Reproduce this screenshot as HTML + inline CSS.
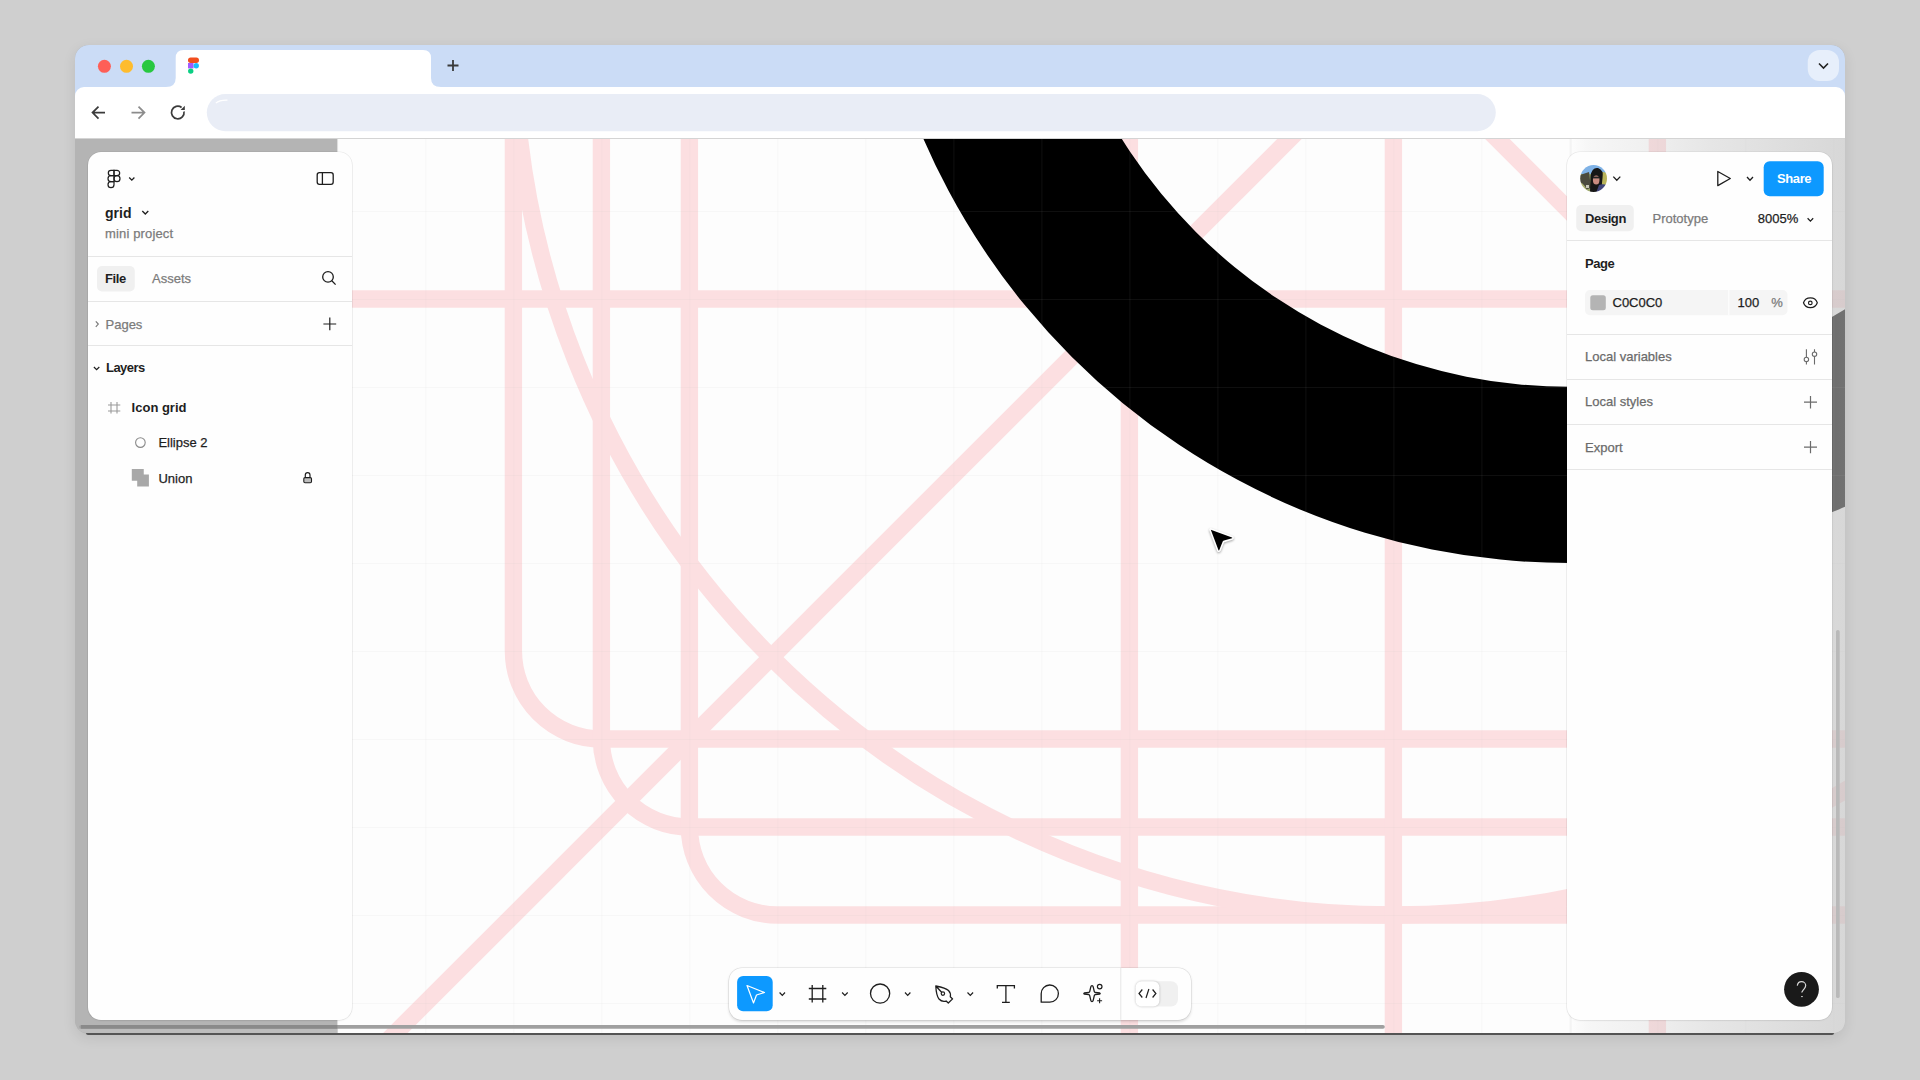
<!DOCTYPE html>
<html><head><meta charset="utf-8">
<style>
*{box-sizing:border-box;margin:0;padding:0}
html,body{width:1920px;height:1080px;overflow:hidden;background:#cfcfcf;font-family:"Liberation Sans",sans-serif}
.a{position:absolute}
.t{position:absolute;white-space:nowrap;line-height:1;font-size:13px;color:#1e1e1e;-webkit-text-stroke:.25px currentColor}
.b{-webkit-text-stroke:0}
.b{font-weight:bold}
.g{color:#7b7b7b}
.panel{position:absolute;background:#fefefe;border-radius:13px;box-shadow:0 0 0 .6px rgba(0,0,0,.09),0 1px 2px rgba(0,0,0,.05)}
.hr{position:absolute;height:1px;background:#e6e6e6}
svg{position:absolute;overflow:visible}
</style></head><body>
<!-- window shadow / base -->
<div class="a" style="left:75px;top:45px;width:1770px;height:989px;border-radius:14px;background:#b4b4b4;box-shadow:0 4px 14px rgba(0,0,0,.09)"></div>
<div class="a" style="left:86px;top:1032.6px;width:1748px;height:2.2px;border-radius:0 0 8px 8px;background:#545454"></div>
<div class="a" style="left:75px;top:45px;width:1770px;height:988px;border-radius:14px;overflow:hidden;background:#b4b4b4">
  <div class="a" style="left:0;top:0;width:1770px;height:60px;background:#cbdcf6"></div>
  <div class="a" style="left:0;top:42px;width:1770px;height:51px;background:#fff;border-radius:9px 9px 0 0"></div>
  <div class="a" style="left:0;top:93px;width:1770px;height:1px;background:#d4d4d4"></div>
</div>
<!-- active tab -->
<svg style="left:0;top:0" width="1920" height="140">
  <path d="M166 87 Q175.7 87 175.7 78 L175.7 58 Q175.7 50 183.7 50 L423 50 Q431 50 431 58 L431 78 Q431 87 441 87 Z" fill="#fff"/>
  <circle cx="104.4" cy="66.3" r="6.5" fill="#fe5f57"/>
  <circle cx="126.5" cy="66.3" r="6.5" fill="#febc2e"/>
  <circle cx="148.4" cy="66.3" r="6.5" fill="#28c840"/>
  <!-- figma logo favicon -->
  <g transform="translate(188,57.6)">
    <rect x="0" y="0" width="11" height="5.4" rx="2.7" fill="#f24e1e"/>
    <rect x="0" y="5.4" width="5.5" height="5.4" rx="0" fill="#a259ff"/>
    <circle cx="8.2" cy="8.1" r="2.7" fill="#1abcfe"/>
    <circle cx="2.75" cy="13.5" r="2.7" fill="#0acf83"/>
  </g>
  <path d="M453 60 V71 M447.5 65.5 H458.5" stroke="#3a3a3a" stroke-width="1.8" fill="none"/>
  <rect x="1807.75" y="50" width="31.25" height="31" rx="12" fill="#e7effb"/>
  <path d="M1819 63.5 L1823.5 68 L1828 63.5" stroke="#222" stroke-width="1.6" fill="none"/>
  <!-- toolbar -->
  <path d="M105 112.6 H93 M98.5 106.6 L92.5 112.6 L98.5 118.6" stroke="#3b3b3b" stroke-width="1.7" fill="none"/>
  <path d="M131.5 112.6 H144 M138.5 106.6 L144.5 112.6 L138.5 118.6" stroke="#8c8c8c" stroke-width="1.7" fill="none"/>
  <path d="M184 111.5 A6.3 6.3 0 1 1 181.6 107.5" stroke="#3b3b3b" stroke-width="1.7" fill="none"/>
  <path d="M184.8 105.8 V110 H180.6 Z" fill="#3b3b3b"/>
  <rect x="206.8" y="94" width="1289" height="37.2" rx="18.6" fill="#e9edf6"/>
  <path d="M215.8 103.2 Q219.5 99.8 227.5 100.1" stroke="#fff" stroke-width="1.1" fill="none"/>
</svg>

<!-- canvas -->
<svg style="left:0;top:0" width="1920" height="1080" viewBox="0 0 1920 1080">
  <defs>
    <clipPath id="cv"><path d="M75 139 H1845 V1019 Q1845 1033 1831 1033 H89 Q75 1033 75 1019 Z"/></clipPath>
    <linearGradient id="rg" x1="0" x2="1" y1="0" y2="0">
      <stop offset="0" stop-color="#bebebe" stop-opacity="0"/>
      <stop offset=".06" stop-color="#bebebe" stop-opacity=".1"/>
      <stop offset=".3" stop-color="#bebebe" stop-opacity=".22"/>
      <stop offset=".5" stop-color="#bebebe" stop-opacity=".36"/>
      <stop offset="1" stop-color="#bebebe" stop-opacity=".6"/>
    </linearGradient>
    <pattern id="grid" x="337.4" y="-1021" width="88" height="88" patternUnits="userSpaceOnUse">
      <path d="M0 0 V88 M0 0 H88" stroke="rgba(180,180,180,.16)" stroke-width="1" fill="none"/>
    </pattern>
  </defs>
  <g clip-path="url(#cv)">
    <rect x="75" y="139" width="1770" height="895" fill="#b4b4b4"/>
    <rect x="337.4" y="-1021" width="2112" height="2112" fill="#fdfdfd"/>
    <g transform="translate(337.4,-1021) scale(88)" fill="none" stroke="#fcdfe1" stroke-width="0.197">
      <rect x="2" y="4" width="20" height="16" rx="1"/>
      <rect x="3" y="3" width="18" height="18" rx="1"/>
      <rect x="4" y="2" width="16" height="20" rx="1"/>
      <circle cx="12" cy="12" r="10"/>
      <line x1="0" y1="0" x2="24" y2="24"/>
      <line x1="0" y1="24" x2="24" y2="0"/>
      <line x1="9" y1="0" x2="9" y2="24"/>
      <line x1="12" y1="0" x2="12" y2="24"/>
      <line x1="15" y1="0" x2="15" y2="24"/>
      <line x1="0" y1="9" x2="24" y2="9"/>
      <line x1="0" y1="12" x2="24" y2="12"/>
      <line x1="0" y1="15" x2="24" y2="15"/>
    </g>
    <path d="M 865.4 -141 A 704 704 0 0 0 2273.4 -141 L 2097.4 -141 A 528 528 0 0 1 1041.4 -141 Z" fill="#000"/>
    <rect x="75" y="139" width="1770" height="895" fill="url(#grid)"/>
    <rect x="1571" y="139" width="274" height="895" fill="url(#rg)"/>
    <rect x="1570.5" y="139" width="1" height="895" fill="rgba(0,0,0,.06)"/>
    <!-- scrollbars -->
    <rect x="75" y="1029" width="262.4" height="4" fill="#bdbdbd"/><rect x="79.3" y="1025" width="1305.5" height="3.7" rx="1.85" fill="#a0a0a0"/><rect x="81" y="1025" width="256.4" height="3.7" fill="#8a8a8a"/>
    <rect x="1836" y="630" width="3.7" height="368" rx="1.85" fill="#b9b9b9"/>
  </g>
</svg>

<!-- left panel -->
<div class="panel" style="left:88px;top:152px;width:264px;height:868px"></div>
<div class="hr" style="left:88px;top:256px;width:264px"></div>
<div class="hr" style="left:88px;top:301px;width:264px"></div>
<div class="hr" style="left:88px;top:345px;width:264px"></div>
<svg style="left:0;top:0" width="400" height="500">
  <g transform="translate(108,169.7) scale(0.3158)" fill="none" stroke="#1e1e1e" stroke-width="3.8">
    <path d="M19 2 H9.5 A8.5 8.5 0 0 0 9.5 19 H19 Z"/>
    <path d="M19 2 H28.5 A8.5 8.5 0 0 1 28.5 19 H19 Z"/>
    <path d="M19 19 H9.5 A9.5 9.5 0 0 0 9.5 38 H19 Z"/>
    <circle cx="28.5" cy="28.5" r="9.5"/>
    <path d="M19 38 H9.5 A9.5 9.5 0 1 0 19 47.5 Z"/>
  </g>
  <path d="M129.2 177.5 L131.8 180.1 L134.4 177.5" stroke="#1e1e1e" stroke-width="1.3" fill="none"/>
  <rect x="317.2" y="172.7" width="16" height="11.6" rx="2.2" stroke="#1e1e1e" stroke-width="1.3" fill="none"/>
  <path d="M322.4 172.7 V184.3" stroke="#1e1e1e" stroke-width="1.3"/>
  <path d="M142.3 211 L145.3 214 L148.3 211" stroke="#1e1e1e" stroke-width="1.3" fill="none"/>
  <rect x="97" y="266" width="37.8" height="25.4" rx="5" fill="#f0f0f0"/>
  <circle cx="328" cy="276.9" r="5.3" stroke="#1e1e1e" stroke-width="1.3" fill="none"/>
  <path d="M331.8 280.8 L335.6 284.6" stroke="#1e1e1e" stroke-width="1.3"/>
  <path d="M95.8 321.3 L98.3 324.1 L95.8 326.9" stroke="#7b7b7b" stroke-width="1.2" fill="none"/>
  <path d="M329.8 317.6 V330.3 M323.4 324 H336.2" stroke="#1e1e1e" stroke-width="1.2" fill="none"/>
  <path d="M93.9 367 L96.6 369.7 L99.3 367" stroke="#1e1e1e" stroke-width="1.2" fill="none"/>
  <path d="M111 402 V413.5 M117 402 V413.5 M108 405 H120.3 M108 411 H120.3" stroke="#9a9a9a" stroke-width="1.1" fill="none"/>
  <circle cx="140.4" cy="442.6" r="4.8" stroke="#8a8a8a" stroke-width="1.1" fill="none"/>
  <path d="M131.8 469.1 H143.75 V474.6 H148.9 V486.6 H137.2 V480.75 H131.8 Z" fill="#a8a8a8"/>
  <rect x="303.8" y="477.6" width="7.7" height="5.2" rx="1.2" fill="#bdbdbd" stroke="#1e1e1e" stroke-width="1.1"/>
  <path d="M305.3 477.6 V474.9 A2.35 2.35 0 0 1 310 474.9 V477.6" stroke="#1e1e1e" stroke-width="1.2" fill="none"/>
</svg>
<div class="t b" style="left:105px;top:205.5px;font-size:14px">grid</div>
<div class="t g" style="left:105px;top:227px;letter-spacing:.15px">mini project</div>
<div class="t b" style="left:105px;top:272.4px;letter-spacing:-.35px">File</div>
<div class="t g" style="left:152px;top:272.4px">Assets</div>
<div class="t g" style="left:105.5px;top:317.5px">Pages</div>
<div class="t b" style="left:106px;top:361.1px;letter-spacing:-.55px">Layers</div>
<div class="t b" style="left:131.6px;top:400.6px">Icon grid</div>
<div class="t" style="left:158.4px;top:436.2px">Ellipse 2</div>
<div class="t" style="left:158.4px;top:471.6px">Union</div>

<!-- right panel -->
<div class="panel" style="left:1567px;top:152px;width:265px;height:868px"></div>
<div class="hr" style="left:1567px;top:240px;width:265px"></div>
<div class="hr" style="left:1567px;top:334px;width:265px"></div>
<div class="hr" style="left:1567px;top:379px;width:265px"></div>
<div class="hr" style="left:1567px;top:424px;width:265px"></div>
<div class="hr" style="left:1567px;top:469px;width:265px"></div>
<svg style="left:0;top:0" width="1920" height="1080">
  <defs><clipPath id="av"><circle cx="1593.6" cy="178.5" r="13.4"/></clipPath><filter id="bl"><feGaussianBlur stdDeviation=".5"/></filter></defs>
  <g clip-path="url(#av)"><g filter="url(#bl)">
    <rect x="1580" y="165" width="28" height="28" fill="#9aa66a"/>
    <rect x="1580" y="164" width="28" height="10" fill="#7fb2e6"/>
    <path d="M1580 175 L1589 172 L1591 188 L1584 190 L1580 186 Z" fill="#4c4c3e"/>
    <path d="M1580 182 Q1585 184 1588 193 L1580 193 Z" fill="#a9b070"/>
    <path d="M1602 172 Q1608 172 1608 176 L1608 184 L1602 184 Z" fill="#b9b45a"/>
    <path d="M1590 193 L1590.5 176 Q1592 167 1598 168 Q1604 170 1602.5 178 L1601 193 Z" fill="#141414"/>
    <ellipse cx="1596.2" cy="180" rx="3.3" ry="4.6" fill="#c98b80"/>
    <rect x="1592.6" y="176.6" width="6.8" height="1.8" fill="#222"/>
    <path d="M1596 193 L1599 185 Q1604 183 1608 186 V193 Z" fill="#41457a"/>
    <rect x="1586" y="185" width="3" height="3" fill="#c8c8b8"/></g>
  </g>
  <path d="M1613.3 176.6 L1616.8 180.3 L1620.3 176.6" stroke="#1e1e1e" stroke-width="1.3" fill="none"/>
  <path d="M1717.8 171.5 L1730.3 178.5 L1717.8 185.6 Z" stroke="#1e1e1e" stroke-width="1.3" stroke-linejoin="round" fill="none"/>
  <path d="M1747 177 L1750 180.2 L1753 177" stroke="#1e1e1e" stroke-width="1.3" fill="none"/>
  <rect x="1763.7" y="161.2" width="60" height="35" rx="6" fill="#0d99ff"/>
  <rect x="1576.2" y="205" width="57.6" height="26.3" rx="5" fill="#f0f0f0"/>
  <path d="M1807.6 218.3 L1810.4 221.1 L1813.2 218.3" stroke="#1e1e1e" stroke-width="1.3" fill="none"/>
  <rect x="1585" y="290" width="202.5" height="25.3" rx="5" fill="#f5f5f5"/>
  <rect x="1728.3" y="290" width="1" height="25.3" fill="#fff"/>
  <rect x="1590.3" y="295.3" width="15.5" height="15" rx="2.5" fill="#b4b4b4"/>
  <path d="M1803.5 302.8 C1804.5 299.8 1807 297.9 1810.4 297.9 C1813.8 297.9 1816.3 299.8 1817.3 302.8 C1816.3 305.8 1813.8 307.7 1810.4 307.7 C1807 307.7 1804.5 305.8 1803.5 302.8 Z" stroke="#1e1e1e" stroke-width="1.2" fill="none"/>
  <circle cx="1810.3" cy="302.9" r="1.8" stroke="#1e1e1e" stroke-width="1.2" fill="none"/>
  <path d="M1806.4 349.3 V364.4 M1814.5 349.3 V364.4" stroke="#6b6b6b" stroke-width="1.1"/>
  <circle cx="1806.4" cy="359.4" r="2.2" fill="#fff" stroke="#6b6b6b" stroke-width="1.1"/>
  <circle cx="1814.5" cy="354.2" r="2.2" fill="#fff" stroke="#6b6b6b" stroke-width="1.1"/>
  <path d="M1810.5 395.9 V408.5 M1804 402.2 H1817" stroke="#6b6b6b" stroke-width="1.2"/>
  <path d="M1810.5 441 V453.3 M1804 447.2 H1817" stroke="#6b6b6b" stroke-width="1.2"/>
  <circle cx="1801.5" cy="989.3" r="17.4" fill="#1a1a1a"/>
  <path d="M1797.3 985.6 C1797.8 982.5 1800 981.7 1801.5 981.7 C1804 981.7 1805.7 983.5 1805.7 985.6 C1805.7 987.7 1804.2 988.8 1803 990.3 C1802.2 991.3 1801.8 992 1801.8 992.6" stroke="#d8d8d8" stroke-width="1.2" fill="none"/>
  <rect x="1801.1" y="996.1" width="1.7" height="1" fill="#d8d8d8"/>
</svg>
<div class="t b" style="left:1777px;top:172.4px;color:#fff;letter-spacing:-.4px">Share</div>
<div class="t b" style="left:1585px;top:211.5px;letter-spacing:-.4px">Design</div>
<div class="t g" style="left:1652.5px;top:211.5px">Prototype</div>
<div class="t" style="left:1757.8px;top:211.5px">8005%</div>
<div class="t b" style="left:1585px;top:257px;letter-spacing:-.45px">Page</div>
<div class="t" style="left:1612.5px;top:296.2px">C0C0C0</div>
<div class="t" style="left:1737.5px;top:296.2px">100</div>
<div class="t g" style="left:1771.3px;top:296.2px">%</div>
<div class="t" style="left:1585px;top:350.1px;color:#6b6b6b">Local variables</div>
<div class="t" style="left:1585px;top:395.3px;color:#6b6b6b">Local styles</div>
<div class="t" style="left:1585px;top:440.5px;color:#6b6b6b">Export</div>

<!-- bottom toolbar -->
<div class="panel" style="left:728.7px;top:967.5px;width:462.3px;height:52.3px;border-radius:13px;box-shadow:0 0 0 .5px rgba(0,0,0,.12),0 1.5px 3px rgba(0,0,0,.14)"></div>
<svg style="left:0;top:0" width="1920" height="1080">
  <rect x="737.1" y="976" width="35.6" height="35.3" rx="6" fill="#0d99ff"/>
  <path d="M747 985.5 L764.5 992.5 L756.5 995 L753.5 1003 Z" stroke="#fff" stroke-width="1.2" stroke-linejoin="round" fill="none"/>
  <path d="M779.6 992.5 L782.3 995.3 L785 992.5" stroke="#1e1e1e" stroke-width="1.2" fill="none"/>
  <path d="M812.2 985 V1002.5 M822.8 985 V1002.5 M808.8 988.5 H826.3 M808.8 999 H826.3" stroke="#1e1e1e" stroke-width="1.3" fill="none"/>
  <path d="M842.1 992.5 L844.9 995.3 L847.7 992.5" stroke="#1e1e1e" stroke-width="1.2" fill="none"/>
  <circle cx="880.1" cy="993.6" r="9.6" stroke="#1e1e1e" stroke-width="1.3" fill="none"/>
  <path d="M905 992.5 L907.7 995.3 L910.4 992.5" stroke="#1e1e1e" stroke-width="1.2" fill="none"/>
  <path d="M935.8 986 C941 987 946 988 948.5 990.5 C950.5 992.5 950.8 994.5 950.3 996.8 L952.6 998.9 L948.3 1003 L946.1 1001 C944 1001.6 941 1001.2 939 999 C937 996.5 936 990 935.8 986 Z M935.8 986 L941.6 992.2" stroke="#1e1e1e" stroke-width="1.3" stroke-linejoin="round" fill="none"/>
  <circle cx="942.9" cy="993.6" r="1.7" stroke="#1e1e1e" stroke-width="1.2" fill="none"/>
  <path d="M967.5 992.5 L970.3 995.3 L973.1 992.5" stroke="#1e1e1e" stroke-width="1.2" fill="none"/>
  <path d="M997.3 988.5 V985.6 H1014.4 V988.5 M1005.9 985.6 V1002.3 M1002 1002.3 H1009.8" stroke="#1e1e1e" stroke-width="1.3" fill="none"/>
  <path d="M1041.2 1002.2 V993.8 A8.6 8.6 0 1 1 1049.8 1002.2 Z" stroke="#1e1e1e" stroke-width="1.3" stroke-linejoin="round" fill="none"/>
  <path d="M1092 985.6 Q1092.9 985.6 1093.2 986.9 L1094.3 991.6 Q1094.5 992.3 1095.2 992.5 L1099.7 993 Q1100.7 993.6 1099.7 994.2 L1095.2 994.7 Q1094.5 994.9 1094.3 995.6 L1093.2 1000.3 Q1092.9 1001.6 1092 1001.6 Q1091.1 1001.6 1090.8 1000.3 L1089.7 995.6 Q1089.5 994.9 1088.8 994.7 L1084.3 994.2 Q1083.3 993.6 1084.3 993 L1088.8 992.5 Q1089.5 992.3 1089.7 991.6 L1090.8 986.9 Q1091.1 985.6 1092 985.6 Z" stroke="#1e1e1e" stroke-width="1.3" stroke-linejoin="round" fill="none"/>
  <circle cx="1099.7" cy="986.6" r="2.3" stroke="#1e1e1e" stroke-width="1.2" fill="none"/>
  <path d="M1099.6 998.3 V1003.3 M1097.1 1000.8 H1102.1" stroke="#1e1e1e" stroke-width="1.1"/>
  <rect x="1120.3" y="967.5" width="1" height="52.3" fill="#e6e6e6"/>
  <rect x="1135.6" y="981.3" width="42.4" height="25.2" rx="7" fill="#f0f0f0"/>
  <rect x="1135.6" y="981.3" width="23.8" height="25.2" rx="6" fill="#fff" style="filter:drop-shadow(0 0 1px rgba(0,0,0,.25))"/>
  <path d="M1142.3 989.5 L1139 993.5 L1142.3 997.5 M1152.6 989.5 L1155.9 993.5 L1152.6 997.5 M1148.9 989 L1146 998" stroke="#1e1e1e" stroke-width="1.2" fill="none"/>
</svg>

<!-- cursor -->
<svg style="left:0;top:0" width="1920" height="1080">
  <path d="M1210.8 529.7 L1232 537.4 Q1232.6 537.8 1232 538.2 L1224 540.6 Q1222.8 541 1222.4 542.2 L1219.2 550.2 Q1218.8 550.8 1218.5 550.2 Z" fill="#000" stroke="#fff" stroke-width="3.2" stroke-linejoin="round" paint-order="stroke" style="filter:drop-shadow(0 1px 1.2px rgba(0,0,0,.35))"/>
</svg>
</body></html>
